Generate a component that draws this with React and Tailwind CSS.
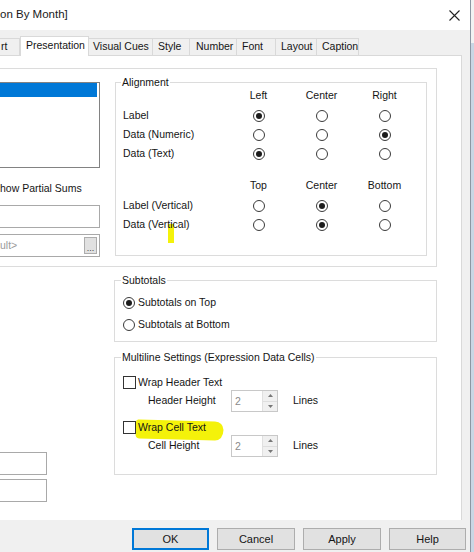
import React from "react";

function Radio({ checked }) {
  return (
    <span className="w-[12px] h-[12px] rounded-full border border-[#3a3a3a] bg-white flex items-center justify-center shrink-0">
      {checked && <span className="w-[6px] h-[6px] rounded-full bg-[#1c1c1c]" />}
    </span>
  );
}

function Check() {
  return <span className="w-[13px] h-[13px] border border-[#333] bg-white shrink-0" />;
}

function Spin() {
  return (
    <div className="flex h-[22px] w-[47px] border border-[#c8c8c8] bg-white">
      <span className="flex-1 pl-[3px] text-[#8a8a8a] leading-[20px]">2</span>
      <div className="w-[15px] flex flex-col border-l border-[#e0e0e0] bg-[#f0f0f0]">
        <div className="flex-1 flex items-center justify-center border-b border-[#dedede]">
          <svg width="5" height="3" viewBox="0 0 5 3"><path d="M0 3 L2.5 0 L5 3 Z" fill="#777" /></svg>
        </div>
        <div className="flex-1 flex items-center justify-center">
          <svg width="5" height="3" viewBox="0 0 5 3"><path d="M0 0 L2.5 3 L5 0 Z" fill="#777" /></svg>
        </div>
      </div>
    </div>
  );
}

function Legend({ children, left = "left-[5px]" }) {
  return (
    <span className={`absolute -top-[7px] ${left} bg-white px-[1px] leading-[13px]`}>{children}</span>
  );
}

const tabs = [
  { t: "rt", w: "w-[20px]", pl: "pl-[1px]" },
  { t: "Presentation", w: "w-[69px]", pl: "pl-[5px]", sel: true },
  { t: "Visual Cues", w: "w-[64px]", pl: "pl-[4px]" },
  { t: "Style", w: "w-[37px]", pl: "pl-[5px]" },
  { t: "Number", w: "w-[47px]", pl: "pl-[6px]" },
  { t: "Font", w: "w-[39px]", pl: "pl-[5px]" },
  { t: "Layout", w: "w-[41px]", pl: "pl-[5px]" },
  { t: "Caption", w: "w-[42px]", pl: "pl-[5px]" },
];

function AlignRow({ label, vals }) {
  return (
    <>
      <div className="h-[19px] flex items-center">{label}</div>
      {vals.map((v, i) => (
        <div key={i} className="h-[19px] flex items-center justify-center">
          <Radio checked={v} />
        </div>
      ))}
    </>
  );
}

function HeadRow({ cols }) {
  return (
    <>
      <div className="h-[21px]" />
      {cols.map((c) => (
        <div key={c} className="h-[21px] flex items-center justify-center">{c}</div>
      ))}
    </>
  );
}

function Btn({ children, w, def }) {
  return (
    <div
      className={`${w} h-[22px] flex items-center justify-center bg-[#e1e1e1] text-[11px] ${
        def ? "border-2 border-[#0078d7]" : "border border-[#adadad]"
      }`}
    >
      {children}
    </div>
  );
}

export default function App() {
  return (
    <div className="w-[474px] h-[552px] flex overflow-hidden bg-white text-[10.5px] text-[#151515] font-['Liberation_Sans',Arial,sans-serif]">
      <div className="w-[470px] flex flex-col bg-[#f0f0f0]">
        {/* title bar */}
        <div className="h-[30px] shrink-0 bg-white flex items-center justify-between pr-[10px]">
          <span className="text-[11.5px] text-[#1a1a1a]">on By Month]</span>
          <svg width="11" height="11" viewBox="0 0 11 11">
            <path d="M0.5 0.5 L10.5 10.5 M10.5 0.5 L0.5 10.5" stroke="#222" strokeWidth="1.1" />
          </svg>
        </div>
        {/* tab strip */}
        <div className="h-[25px] shrink-0 flex items-end">
          {tabs.map((tb) =>
            tb.sel ? (
              <div
                key={tb.t}
                className={`${tb.w} ${tb.pl} h-[20px] -mb-px relative z-10 bg-white border-t border-l border-r border-[#d9d9d9] flex items-center pb-[1px]`}
              >
                {tb.t}
              </div>
            ) : (
              <div
                key={tb.t}
                className={`${tb.w} ${tb.pl} h-[17px] bg-[#f0f0f0] border-t border-r border-[#d9d9d9] flex items-center`}
              >
                {tb.t}
              </div>
            )
          )}
        </div>
        {/* panel */}
        <div className="w-[462px] h-[465px] shrink-0 bg-white border-t border-r border-[#d9d9d9] flex flex-col">
          {/* outer frame */}
          <div className="mt-[12px] w-[437px] h-[199px] border-t border-r border-b border-[#dcdcdc] flex">
            <div className="w-[100px] flex flex-col">
              <div className="mt-[13px] h-[86px] border-t border-r border-b border-[#828282] pt-0">
                <div className="w-[97px] h-[14px] bg-[#0078d7]" />
              </div>
              <div className="mt-[13px] h-[14px] leading-[14px]">how Partial Sums</div>
              <div className="mt-[10px] h-[23px] border-t border-r border-b border-[#a9a9a9]" />
              <div className="mt-[6px] h-[23px] border-t border-r border-b border-[#a9a9a9] flex items-center justify-between pr-[2px]">
                <span className="text-[#9a9a9a]">ult&gt;</span>
                <span className="w-[13px] h-[17px] bg-[#e1e1e1] border border-[#adadad] flex items-end justify-center text-[9px] leading-[10px] text-[#444]">...</span>
              </div>
            </div>
            <div className="ml-[15px] mt-[13px] w-[312px] h-[174px] border border-[#dcdcdc] relative">
              <Legend>Alignment</Legend>
              <div className="absolute left-[52px] top-[141px] w-[6px] h-[19px] bg-[#f4f20a]" />
              <div className="relative pt-[2px] pl-[7px] grid grid-cols-[104px_63px_63px_63px]">
                <HeadRow cols={["Left", "Center", "Right"]} />
                <AlignRow label="Label" vals={[true, false, false]} />
                <AlignRow label="Data (Numeric)" vals={[false, false, true]} />
                <AlignRow label="Data (Text)" vals={[true, false, false]} />
                <div className="col-span-4 h-[12px]" />
                <HeadRow cols={["Top", "Center", "Bottom"]} />
                <AlignRow label="Label (Vertical)" vals={[false, true, false]} />
                <AlignRow label="Data (Vertical)" vals={[false, true, false]} />
              </div>
            </div>
          </div>
          {/* lower area */}
          <div className="flex">
            <div className="w-[114px] pt-[185px] flex flex-col">
              <div className="w-[47px] h-[23px] border-t border-r border-b border-[#a9a9a9]" />
              <div className="mt-[4px] w-[47px] h-[23px] border-t border-r border-b border-[#a9a9a9]" />
            </div>
            <div className="w-[323px] flex flex-col">
              <div className="mt-[13px] h-[62px] border border-[#dcdcdc] relative pt-[11px] pl-[8px]">
                <Legend left="left-[6px]">Subtotals</Legend>
                <div className="h-[22px] flex items-center gap-[3px]">
                  <Radio checked />
                  <span>Subtotals on Top</span>
                </div>
                <div className="h-[22px] flex items-center gap-[3px]">
                  <Radio />
                  <span>Subtotals at Bottom</span>
                </div>
              </div>
              <div className="mt-[15px] h-[118px] border border-[#dcdcdc] relative pt-[17px] pl-[8px]">
                <Legend left="left-[6px]">Multiline Settings (Expression Data Cells)</Legend>
                <svg className="absolute left-[20px] top-[61px]" width="89" height="22" viewBox="0 0 89 22">
                  <path d="M1 3 Q1 0 4 0.5 L80 2.5 Q88 3 88.5 11 Q88 21 80 21.5 L4 19.5 Q0.5 19 0.5 15 Z" fill="#f4f20a" />
                </svg>
                <div className="h-[15px] flex items-center gap-[2px]">
                  <Check />
                  <span>Wrap Header Text</span>
                </div>
                <div className="h-[22px] flex items-center pl-[25px]">
                  <span className="w-[83px]">Header Height</span>
                  <Spin />
                  <span className="ml-[15px]">Lines</span>
                </div>
                <div className="relative mt-[8px] h-[15px] flex items-center gap-[2px]">
                  <Check />
                  <span>Wrap Cell Text</span>
                </div>
                <div className="h-[22px] flex items-center pl-[25px]">
                  <span className="w-[83px]">Cell Height</span>
                  <Spin />
                  <span className="ml-[15px]">Lines</span>
                </div>
              </div>
            </div>
          </div>
        </div>
        {/* buttons */}
        <div className="flex-1 flex pt-[8px] pl-[132px] gap-[8px]">
          <Btn w="w-[77px]" def>OK</Btn>
          <Btn w="w-[78px]">Cancel</Btn>
          <Btn w="w-[78px]">Apply</Btn>
          <Btn w="w-[77px]">Help</Btn>
        </div>
      </div>
      <div className="w-[4px] border-l border-[#8c97a3] flex flex-col">
        <div className="h-[43px] bg-[#f2f2f2]" />
        <div className="flex-1 bg-[#c9d6e4]" />
      </div>
    </div>
  );
}
